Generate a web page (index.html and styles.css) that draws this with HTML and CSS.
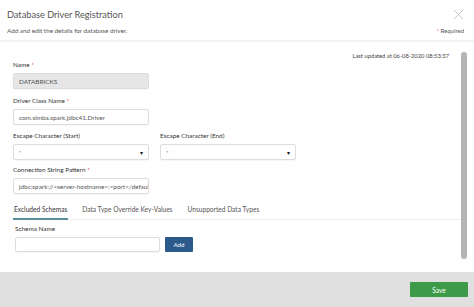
FILE: index.html
```html
<!DOCTYPE html>
<html lang="en">
<head>
  <meta charset="UTF-8">
  <title>Database Driver Registration</title>
  <link rel="stylesheet" href="styles.css">
</head>
<body>
  <div class="modal">
    <div class="modal-header">
      <div class="title-row">
        <h1>Database Driver Registration</h1>
        <svg class="close" width="11" height="11" viewBox="0 0 11 11"><path d="M1 1L10 10M10 1L1 10" stroke="#c8c8c8" stroke-width="1"/></svg>
      </div>
      <div class="sub-row">
        <p>Add and edit the details for database driver.</p>
        <span class="required"><span class="star">*</span> Required</span>
      </div>
    </div>

    <div class="modal-body">
      <div class="updated">Last updated at 06-08-2020 08:53:37</div>

      <div class="field">
        <label>Name <span class="star">*</span></label>
        <div class="input disabled">DATABRICKS</div>
      </div>

      <div class="field tight">
        <label>Driver Class Name <span class="star">*</span></label>
        <div class="input">com.simba.spark.jdbc41.Driver</div>
      </div>

      <div class="two-col">
        <div class="field">
          <label>Escape Character (Start)</label>
          <div class="input select"><span>"</span><span class="caret">&#9662;</span></div>
        </div>
        <div class="field">
          <label>Escape Character (End)</label>
          <div class="input select"><span>"</span><span class="caret">&#9662;</span></div>
        </div>
      </div>

      <div class="field">
        <label>Connection String Pattern <span class="star">*</span></label>
        <div class="input clip">jdbc:spark://&lt;server-hostname&gt;:&lt;port&gt;/default</div>
      </div>

      <div class="tabs">
        <span class="tab active">Excluded Schemas</span>
        <span class="tab">Data Type Override Key-Values</span>
        <span class="tab">Unsupported Data Types</span>
      </div>

      <div class="tab-pane">
        <label>Schema Name</label>
        <div class="add-row">
          <div class="input wide"></div>
          <button class="btn-add">Add</button>
        </div>
      </div>

      <div class="scroll-thumb"></div>
    </div>

    <div class="modal-footer">
      <button class="btn-save">Save</button>
    </div>
  </div>
</body>
</html>
```

FILE: styles.css
```css
* {
  box-sizing: border-box;
}
body {
  margin: 0;
  background: #fff;
  font-family: 'Lato', 'Open Sans', sans-serif;
  color: #444;
}

.modal {
  width: 474px;
  height: 307px;
  display: flex;
  flex-direction: column;
}

.modal-header {
  padding: 8px 10px 6px 7px;
  border-bottom: 1px solid #f0f0f0;
  box-shadow: 0 2px 2px rgba(0, 0, 0, 0.03);
}

.title-row, .sub-row {
  display: flex;
  justify-content: space-between;
  align-items: center;
}

h1 {
  margin: 0;
  font-size: 9.2px;
  font-weight: normal;
  color: #555;
  line-height: 13px;
}

.sub-row {
  margin-top: 6px;
}

.sub-row p {
  margin: 0;
  font-size: 6.3px;
  color: #555;
}

.required {
  font-size: 6px;
  color: #555;
}

.star {
  color: #d9534f;
}

.modal-body {
  flex: 1;
  position: relative;
  padding: 11px 0 0 13px;
  overflow: hidden;
}

.updated {
  text-align: right;
  font-size: 5.8px;
  color: #444;
  padding-right: 25px;
  margin-bottom: 2px;
}

.field {
  margin-bottom: 8px;
}

.field.tight {
  margin-bottom: 7px;
}

.two-col .field {
  margin-bottom: 6px;
}

label {
  display: block;
  font-size: 6.4px;
  color: #333;
  margin-bottom: 5px;
}

.input {
  width: 136px;
  height: 16px;
  border: 1px solid #ddd;
  border-radius: 2px;
  background: #fff;
  font-size: 6.4px;
  color: #555;
  padding: 0 5px;
  display: flex;
  align-items: center;
  box-shadow: 0 1px 1px rgba(0, 0, 0, 0.04);
}

.input.disabled {
  background: #e6e6e6;
  border-color: #ddd;
}

.input.clip {
  white-space: nowrap;
  overflow: hidden;
  text-overflow: clip;
}

.select {
  justify-content: space-between;
  color: #888;
}

.caret {
  color: #111;
  font-size: 6px;
}

.two-col {
  display: grid;
  grid-template-columns: 136px 136px;
  column-gap: 11px;
}

.tabs {
  display: flex;
  gap: 13px;
  margin-top: 8px;
  margin-right: 14px;
  border-bottom: 1px solid #eee;
}

.tab {
  font-size: 6.6px;
  color: #555;
  padding: 3px 1px 5px;
}

.tab.active {
  color: #333;
  border-bottom: 2px solid #5b8e9c;
  margin-bottom: -1px;
}

.tab-pane {
  padding: 5px 0 0 2px;
}

.add-row {
  display: flex;
  gap: 5px;
}

.input.wide {
  width: 145px;
  height: 15px;
}

.btn-add {
  width: 28px;
  height: 15px;
  border: none;
  border-radius: 1px;
  background: #2c5a8b;
  color: #fff;
  font-family: inherit;
  font-size: 6.2px;
  padding: 0;
}

.scroll-thumb {
  position: absolute;
  right: 7px;
  top: 11px;
  width: 6px;
  height: 207px;
  border-radius: 3px;
  background: #b5b5b5;
}

.modal-footer {
  height: 35px;
  background: #e0e0e0;
  display: flex;
  justify-content: flex-end;
  align-items: center;
  padding-right: 6px;
}

.btn-save {
  width: 58px;
  height: 15px;
  border: none;
  border-radius: 1px;
  background: #3d9a48;
  color: #fff;
  font-family: inherit;
  font-size: 6.6px;
  padding: 0;
}
```
